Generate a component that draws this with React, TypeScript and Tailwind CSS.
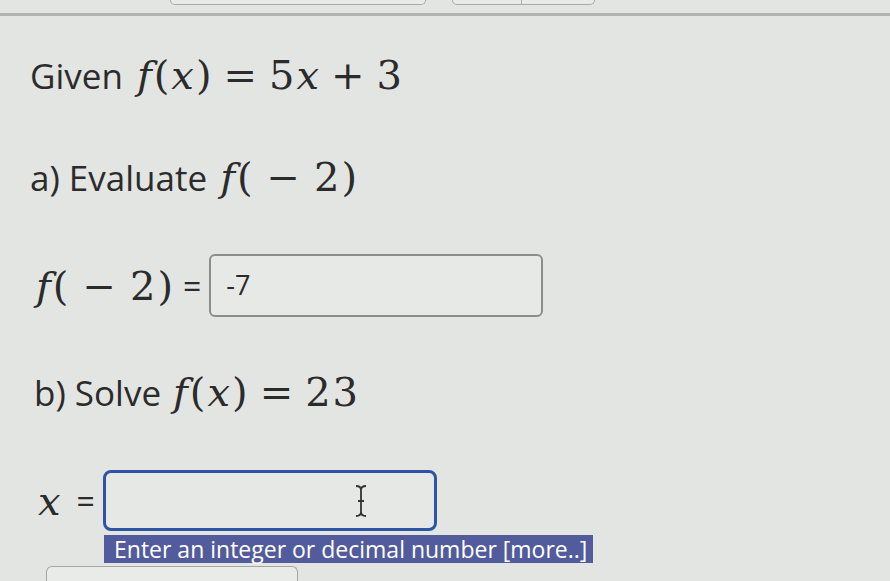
import React from 'react';

const sans = { fontFamily: '"Open Sans", "Noto Sans", sans-serif' };

const M: React.FC<{ children: React.ReactNode }> = ({ children }) => (
  <span className="text-[40px] leading-none tracking-[2px]" style={{ fontFamily: '"DejaVu Serif", "Liberation Serif", serif' }}>
    {children}
  </span>
);

const V: React.FC<{ children: React.ReactNode }> = ({ children }) => <i className="italic">{children}</i>;

const Op: React.FC<{ children: React.ReactNode }> = ({ children }) => <span className="mx-[10px]">{children}</span>;

const Cursor = () => (
  <svg width="14" height="32" viewBox="0 0 14 32" className="text-[#333]">
    <path d="M2 1 C5 1 7 2 7 5 L7 27 C7 30 5 31 2 31 M12 1 C9 1 7 2 7 5 M7 27 C7 30 9 31 12 31 M4 16 L10 16" fill="none" stroke="currentColor" strokeWidth="1.8" />
  </svg>
);

export default function App() {
  return (
    <div className="w-[890px] h-[581px] overflow-hidden bg-[#e3e5e2] text-[#2b2b2b]" style={sans}>
      {/* top toolbar remnants */}
      <div className="h-[16px] border-b-[3px] border-[#b2b4b1] flex items-start">
        <div className="ml-[170px] w-[256px] h-[5px] border border-t-0 border-[#a9aba8] rounded-b-md bg-[#e9ebe8]" />
        <div className="ml-[26px] w-[70px] h-[5px] border border-t-0 border-[#a9aba8] rounded-bl-md bg-[#e9ebe8]" />
        <div className="w-[73px] h-[5px] border border-t-0 border-l-0 border-[#a9aba8] rounded-br-md bg-[#e9ebe8]" />
      </div>

      <div className="pl-[30px]">
        <div className="mt-[36px] h-[46px] flex items-center text-[35px] leading-none">
          <span className="mr-[14px]">Given</span>
          <M>
            <V>f</V>(<V>x</V>)<Op>=</Op>5<V>x</V><Op>+</Op>3
          </M>
        </div>

        <div className="mt-[56px] h-[46px] flex items-center text-[35px] leading-none">
          <span className="mr-[13px]">a) Evaluate</span>
          <M>
            <V>f</V>(<span className="mx-[12px]">−</span>2)
          </M>
        </div>

        <div className="mt-[54px] flex items-center">
          <span className="ml-[6px]">
            <M>
              <V>f</V>(<span className="mx-[12px]">−</span>2)
            </M>
          </span>
          <span className="ml-[8px] text-[32px] leading-none">=</span>
          <div className="ml-[8px] w-[334px] h-[63px] border-2 border-[#8c8e8b] rounded-md bg-[#e7e9e6] flex items-center pl-[15px] text-[27px]">
            -7
          </div>
        </div>

        <div className="mt-[52px] h-[46px] flex items-center text-[35px] leading-none">
          <span className="ml-[4px] mr-[12px]">b) Solve</span>
          <M>
            <V>f</V>(<V>x</V>)<Op>=</Op>23
          </M>
        </div>

        <div className="mt-[55px] flex items-center">
          <span className="ml-[8px]">
            <M>
              <V>x</V>
            </M>
          </span>
          <span className="ml-[14px] text-[32px] leading-none">=</span>
          <div className="ml-[8px] w-[334px] h-[61px] border-[3px] border-[#2d55a6] rounded-lg bg-[#e6e8e5] flex items-center justify-end pr-[66px]">
            <Cursor />
          </div>
        </div>

        <div className="ml-[74px] mt-[4px] w-[489px] h-[28px] bg-[#525b9b] text-white text-[23px] font-medium leading-[28px] pl-[10px] whitespace-nowrap">
          Enter an integer or decimal number [more..]
        </div>

        <div className="ml-[16px] mt-[3px] w-[252px] h-[20px] border border-b-0 border-[#a5a7a4] rounded-t-md bg-[#e9ebe8]" />
      </div>
    </div>
  );
}
